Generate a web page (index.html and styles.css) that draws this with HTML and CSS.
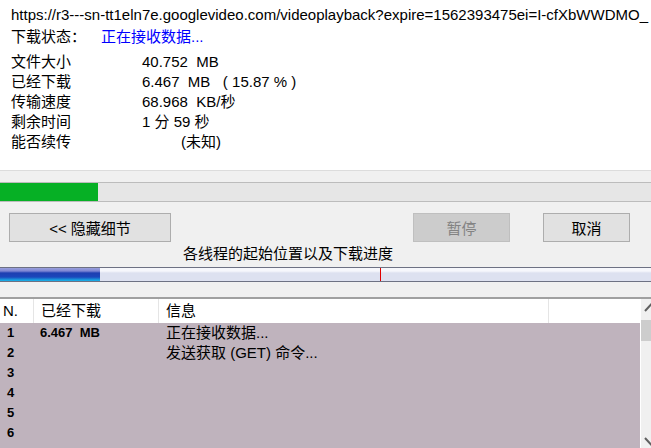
FILE: index.html
```html
<!DOCTYPE html>
<html lang="zh-CN">
<head>
<meta charset="utf-8">
<title>下载</title>
<link rel="stylesheet" href="styles.css">
</head>
<body>
<div class="window">
  <section class="top">
    <div class="url">https://r3---sn-tt1eln7e.googlevideo.com/videoplayback?expire=1562393475ei=I-cfXbWWDMO_</div>
    <div class="status"><span class="status-label">下载状态：</span><span class="status-value">正在接收数据...</span></div>
    <div class="info">
      <span class="key">文件大小</span><span class="val">40.752&nbsp; MB</span>
      <span class="key">已经下载</span><span class="val">6.467&nbsp; MB&nbsp;&nbsp; ( 15.87 % )</span>
      <span class="key">传输速度</span><span class="val">68.968&nbsp; KB/秒</span>
      <span class="key">剩余时间</span><span class="val">1 分 59 秒</span>
      <span class="key">能否续传</span><span class="val val-indent">(未知)</span>
    </div>
  </section>

  <div class="progress"><div class="progress-fill" style="width:98px"></div></div>

  <div class="buttons">
    <button class="btn btn-details">&lt;&lt; 隐藏细节</button>
    <button class="btn btn-pause" disabled>暂停</button>
    <button class="btn btn-cancel">取消</button>
  </div>

  <div class="threads-label">各线程的起始位置以及下载进度</div>
  <div class="threads">
    <div class="threads-fill" style="width:100px"></div>
    <div class="threads-marker" style="left:380px"></div>
  </div>

  <div class="list">
    <div class="table">
      <div class="thead">
        <div class="th c1">N.</div>
        <div class="th c2">已经下载</div>
        <div class="th c3">信息</div>
        <div class="th c4"></div>
      </div>
      <div class="tbody">
        <div class="tr"><span class="td n">1</span><span class="td d">6.467&nbsp; MB</span><span class="td m">正在接收数据...</span></div>
        <div class="tr"><span class="td n">2</span><span class="td d"></span><span class="td m">发送获取 (GET) 命令...</span></div>
        <div class="tr"><span class="td n">3</span><span class="td d"></span><span class="td m"></span></div>
        <div class="tr"><span class="td n">4</span><span class="td d"></span><span class="td m"></span></div>
        <div class="tr"><span class="td n">5</span><span class="td d"></span><span class="td m"></span></div>
        <div class="tr"><span class="td n">6</span><span class="td d"></span><span class="td m"></span></div>
      </div>
    </div>
    <div class="scrollbar">
      <svg class="arrow arrow-up" width="17" height="17" viewBox="0 0 17 17"><path d="M4 12 L10 5.5 L16 12" fill="none" stroke="#606060" stroke-width="2"/></svg>
      <div class="thumb"></div>
      <svg class="arrow arrow-down" width="17" height="17" viewBox="0 0 17 17"><path d="M4 7 L10 13.5 L16 7" fill="none" stroke="#606060" stroke-width="2"/></svg>
    </div>
  </div>
</div>
</body>
</html>
```
FILE: styles.css
```css
html, body {
  margin: 0;
  padding: 0;
}
body {
  width: 651px;
  height: 448px;
  overflow: hidden;
  background: #f0f0f0;
  font-family: "Liberation Sans", "Noto Sans CJK SC", sans-serif;
  font-size: 15px;
  color: #000;
}
.window {
  display: flex;
  flex-direction: column;
  height: 448px;
}
.top {
  background: #fff;
  border-bottom: 1px solid #dcdcdc;
  padding: 5px 0 0 11px;
  box-sizing: border-box;
  height: 171px;
}
.url {
  white-space: nowrap;
  line-height: 20px;
}
.status {
  margin-top: 2px;
  display: flex;
  line-height: 20px;
}
.status-label {
  width: 90px;
}
.status-value {
  color: #0000ff;
}
.info {
  margin-top: 5px;
  display: grid;
  grid-template-columns: 131px 1fr;
  grid-auto-rows: 20px;
  line-height: 20px;
}
.val-indent {
  padding-left: 39px;
}
.progress {
  margin-top: 11px;
  height: 18px;
  border-top: 1px solid #bcbcbc;
  border-bottom: 1px solid #bcbcbc;
  background: #e6e6e6;
}
.progress-fill {
  height: 100%;
  background: #06b025;
}
.buttons {
  margin-top: 11px;
  display: flex;
  padding: 0 21px 0 9px;
}
.btn {
  height: 29px;
  box-sizing: border-box;
  border: 1px solid #adadad;
  background: #e1e1e1;
  font-family: inherit;
  font-size: 15px;
  color: #000;
  padding: 0;
}
.btn-details { width: 162px; }
.btn-pause {
  width: 97px;
  margin-left: auto;
  background: #cccccc;
  border-color: #bfbfbf;
  color: #838383;
}
.btn-cancel {
  width: 87px;
  margin-left: 33px;
}
.threads-label {
  margin-top: 2px;
  line-height: 20px;
  padding-left: 183px;
}
.threads {
  position: relative;
  margin-top: 3px;
  height: 13px;
  border-top: 1px solid #6d7183;
  border-bottom: 1px solid #6d7183;
  background: linear-gradient(#f6f7fc 0, #f6f7fc 3px, #dde1f0 5px, #dde1f0 100%);
}
.threads-fill {
  height: 100%;
  background: linear-gradient(#9aa0dc 0, #7d86d4 3px, #1d3fb2 5px, #1b47bb 9px, #18a0e0 12px, #1bb0e8 13px);
}
.threads-marker {
  position: absolute;
  top: 0;
  width: 1px;
  height: 13px;
  background: #e00000;
}
.list {
  margin-top: 15px;
  border-top: 2px solid #a0a0a0;
  display: flex;
  flex: 1;
  min-height: 0;
}
.table {
  flex: none;
  width: 640px;
  border-right: 1px solid #fff;
  display: flex;
  flex-direction: column;
}
.thead {
  display: flex;
  height: 24px;
  background: #fff;
  line-height: 24px;
}
.th {
  box-sizing: border-box;
  border-right: 1px solid #e5e5e5;
}
.th.c1 { width: 34px; padding-left: 3px; }
.th.c2 { width: 125px; padding-left: 7px; }
.th.c3 { width: 390px; padding-left: 7px; }
.th.c4 { flex: 1; border-right: 0; }
.tbody {
  flex: 1;
  background: #bfb3bd;
}
.tr {
  display: flex;
  height: 20px;
  line-height: 20px;
}
.td {
  box-sizing: border-box;
}
.td.n { width: 34px; padding-left: 7px; font-weight: bold; font-size: 13px; }
.td.d { width: 125px; padding-left: 6px; font-weight: bold; font-size: 13px; }
.td.m { padding-left: 7px; }
.scrollbar {
  width: 17px;
  flex: none;
  background: #f0f0f0;
  display: flex;
  flex-direction: column;
}
.arrow { display: block; flex: none; }
.thumb {
  margin-top: 4px;
  height: 21px;
  background: #cdcdcd;
}
.arrow-down {
  margin-top: auto;
}
```
